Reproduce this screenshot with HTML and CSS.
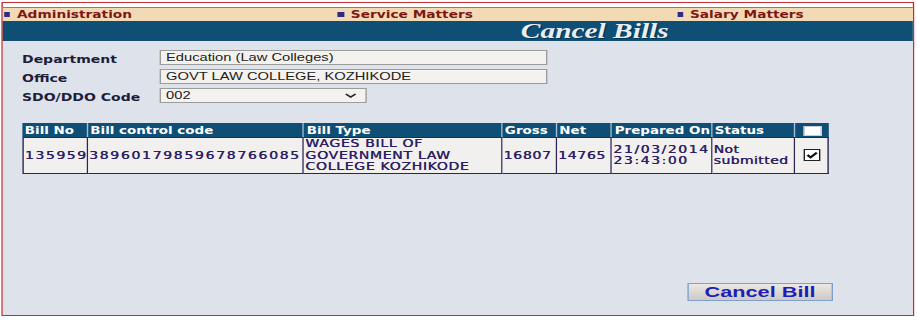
FILE: index.html
```html
<!DOCTYPE html>
<html lang="en">
<head>
<meta charset="utf-8">
<title>Cancel Bills</title>
<link rel="stylesheet" href="styles.css">
</head>
<body>
<div class="stage">
  <div class="frame">
    <nav class="menu">
      <a class="menu-item" href="#"><span class="bullet"></span>Administration</a>
      <a class="menu-item" href="#"><span class="bullet"></span>Service Matters</a>
      <a class="menu-item" href="#"><span class="bullet"></span>Salary Matters</a>
    </nav>
    <header class="titlebar"><h1>Cancel Bills</h1></header>
    <main class="content">
      <form class="filters">
        <label>Department</label>
        <div class="field field-wide">Education (Law Colleges)</div>
        <label>Office</label>
        <div class="field field-wide">GOVT LAW COLLEGE, KOZHIKODE</div>
        <label>SDO/DDO Code</label>
        <div class="field field-select"><span>002</span>
          <svg class="chevron" viewBox="0 0 9 5" width="9" height="5"><path d="M1 1 L4.5 4 L8 1" fill="none" stroke="#222" stroke-width="1.4"/></svg>
        </div>
      </form>

      <table class="bills">
        <colgroup>
          <col class="c-no"><col class="c-code"><col class="c-type"><col class="c-gross"><col class="c-net"><col class="c-date"><col class="c-status"><col class="c-check">
        </colgroup>
        <thead>
          <tr>
            <th>Bill No</th>
            <th>Bill control code</th>
            <th>Bill Type</th>
            <th>Gross</th>
            <th>Net</th>
            <th>Prepared On</th>
            <th>Status</th>
            <th class="check-col"><span class="box"></span></th>
          </tr>
        </thead>
        <tbody>
          <tr>
            <td class="t-no">135959</td>
            <td class="t-code">38960179859678766085</td>
            <td class="t-type">WAGES BILL OF<br>GOVERNMENT LAW<br>COLLEGE KOZHIKODE</td>
            <td class="t-amt">16807</td>
            <td class="t-amt">14765</td>
            <td class="t-date">21/03/2014<br>23:43:00</td>
            <td class="t-status">Not<br>submitted</td>
            <td class="check-col"><span class="box box-checked"><svg viewBox="0 0 10 10" width="10" height="10"><path d="M1.8 5 L4 7.3 L8.4 2.6" fill="none" stroke="#111" stroke-width="1.9"/></svg></span></td>
          </tr>
        </tbody>
      </table>

      <div class="actions">
        <button class="cancel-btn" type="button">Cancel Bill</button>
      </div>
    </main>
  </div>
</div>
</body>
</html>
```
FILE: styles.css
```css
html, body {
  margin: 0;
  padding: 0;
  background: #ffffff;
  overflow: hidden;
}

/* The reference is a horizontally stretched capture: lay out at natural width, then stretch */
.stage {
  width: 655px;
  transform: scaleX(1.4);
  transform-origin: 0 0;
  font-family: "DejaVu Sans", Verdana, sans-serif;
}

.frame {
  margin: 1.5px 0 0 1.43px;
  width: 651.4px;
  box-sizing: border-box;
  border-style: solid;
  border-color: #c62b2e;
  border-width: 1.5px 1px;
  padding-top: 4.5px;
  background: #ffffff;
}

.menu {
  display: grid;
  grid-template-columns: 238.5px 242.2px 1fr;
  height: 14px;
  box-sizing: border-box;
  border-top: 1px solid #9b7a5c;
  background: #f3dab6;
  padding-left: 0.5px;
}

.menu-item {
  display: flex;
  align-items: center;
  font-size: 9.8px;
  font-weight: bold;
  color: #7d1616;
  text-decoration: none;
  white-space: nowrap;
}

.bullet {
  width: 4.5px;
  height: 4.5px;
  background: #2c2c84;
  margin-right: 4.7px;
}

.titlebar {
  height: 20px;
  background: #0f4f75;
  padding-left: 369.6px;
  display: flex;
  align-items: center;
}

.titlebar h1 {
  margin: 0;
  font: italic bold 21px/20px "Liberation Serif", "Times New Roman", serif;
  color: #e9eef3;
  text-shadow: 1px 1px 0 #07334d;
}

.content {
  height: 274px;
  box-sizing: border-box;
  background: #dee2ea;
  padding: 9px 0 0 13.3px;
}

.filters {
  display: grid;
  grid-template-columns: 98.6px auto;
  row-gap: 4px;
  align-items: center;
  justify-items: start;
}

.filters label {
  font-size: 10px;
  line-height: 11px;
  font-weight: bold;
  color: #1d1d3a;
  padding-top: 3.5px;
}

.field {
  height: 15px;
  box-sizing: border-box;
  border: 1px solid #9c9c9c;
  background: #f4f2ee;
  font: 10.5px/13px "Liberation Sans", Arial, sans-serif;
  color: #202020;
  padding-left: 3.3px;
}

.field-wide {
  width: 277px;
}

.field-select {
  width: 148px;
  display: flex;
  justify-content: space-between;
  align-items: center;
  padding-right: 6px;
}

.chevron {
  display: block;
}

.bills {
  margin-top: 20px;
  width: 576.4px;
  table-layout: fixed;
  border-collapse: separate;
  border-spacing: 0;
}

.c-no { width: 46.8px; }
.c-code { width: 154.6px; }
.c-type { width: 141.5px; }
.c-gross { width: 38.9px; }
.c-net { width: 39.6px; }
.c-date { width: 71.5px; }
.c-status { width: 59.3px; }
.c-check { width: 24.2px; }

.bills th {
  height: 14px;
  padding: 0 0 0 2px;
  background: #0f4f75;
  color: #ffffff;
  font-size: 9.6px;
  font-weight: bold;
  text-align: left;
  border-right: 1px solid #aabdd0;
  white-space: nowrap;
  vertical-align: middle;
}

.bills th:last-child {
  border-right: none;
}

.bills td {
  height: 35px;
  box-sizing: border-box;
  padding: 0 0 0 1px;
  background: #f2f0ef;
  color: #2d1f66;
  font-size: 10px;
  line-height: 11.6px;
  text-shadow: 0.35px 0 0 #2d1f66;
  border-top: 1px solid #2a2458;
  border-right: 1px solid #2a2458;
  border-bottom: 1.5px solid #2a2458;
  vertical-align: middle;
  white-space: nowrap;
}

.bills td:first-child {
  border-left: 1px solid #2a2458;
}

.bills td.t-no { letter-spacing: 1.1px; }
.bills td.t-code { letter-spacing: 1.2px; }
.bills td.t-type { letter-spacing: 0.5px; }
.bills td.t-amt { letter-spacing: 0.5px; }
.bills td.t-date { letter-spacing: 1.1px; }
.bills td.t-status { letter-spacing: 0.3px; }

.bills .check-col {
  text-align: center;
  padding: 0;
}

.box {
  display: inline-block;
  vertical-align: middle;
  width: 13px;
  height: 10px;
  box-sizing: border-box;
  background: #ffffff;
  border: 1px solid #c8cdd4;
}

.box-checked {
  width: 12px;
  height: 12px;
  border: 1px solid #222222;
}

.box-checked svg {
  display: block;
}

.actions {
  display: flex;
  justify-content: flex-end;
  margin-top: 109px;
  padding-right: 56.8px;
}

.cancel-btn {
  width: 104.3px;
  height: 18px;
  box-sizing: border-box;
  border: 1px solid #7f9fd0;
  background: linear-gradient(#ebe8e5, #cdc9c4);
  font: bold 15.5px/16px "Liberation Sans", Arial, sans-serif;
  color: #1d1db8;
  padding: 0;
}
```
